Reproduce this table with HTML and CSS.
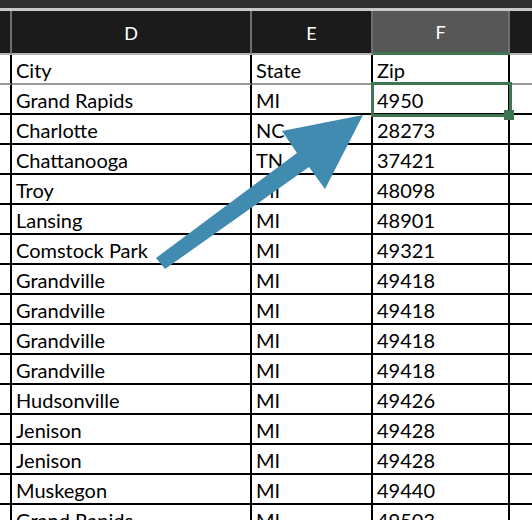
FILE: index.html
```html
<!DOCTYPE html>
<html>
<head>
<meta charset="utf-8">
<link rel="stylesheet" href="styles.css">
</head>
<body>
<div class="sheet">
  <div class="topbar"></div>
  <div class="topline"></div>
  <div class="grid">
    <div class="hd"></div><div class="hd">D</div><div class="hd">E</div><div class="hd hd-sel">F</div><div class="hd hd-last"></div>

    <div class="c first-row"></div><div class="c first-row">City</div><div class="c first-row">State</div><div class="c first-row">Zip</div><div class="c first-row last"></div>

    <div class="c"></div><div class="c">Grand Rapids</div><div class="c">MI</div><div class="c sel">4950<span class="handle"></span></div><div class="c last"></div>
    <div class="c"></div><div class="c">Charlotte</div><div class="c">NC</div><div class="c">28273</div><div class="c last"></div>
    <div class="c"></div><div class="c">Chattanooga</div><div class="c">TN</div><div class="c">37421</div><div class="c last"></div>
    <div class="c"></div><div class="c">Troy</div><div class="c">MI</div><div class="c">48098</div><div class="c last"></div>
    <div class="c"></div><div class="c">Lansing</div><div class="c">MI</div><div class="c">48901</div><div class="c last"></div>
    <div class="c"></div><div class="c">Comstock Park</div><div class="c">MI</div><div class="c">49321</div><div class="c last"></div>
    <div class="c"></div><div class="c">Grandville</div><div class="c">MI</div><div class="c">49418</div><div class="c last"></div>
    <div class="c"></div><div class="c">Grandville</div><div class="c">MI</div><div class="c">49418</div><div class="c last"></div>
    <div class="c"></div><div class="c">Grandville</div><div class="c">MI</div><div class="c">49418</div><div class="c last"></div>
    <div class="c"></div><div class="c">Grandville</div><div class="c">MI</div><div class="c">49418</div><div class="c last"></div>
    <div class="c"></div><div class="c">Hudsonville</div><div class="c">MI</div><div class="c">49426</div><div class="c last"></div>
    <div class="c"></div><div class="c">Jenison</div><div class="c">MI</div><div class="c">49428</div><div class="c last"></div>
    <div class="c"></div><div class="c">Jenison</div><div class="c">MI</div><div class="c">49428</div><div class="c last"></div>
    <div class="c"></div><div class="c">Muskegon</div><div class="c">MI</div><div class="c">49440</div><div class="c last"></div>
    <div class="c"></div><div class="c">Grand Rapids</div><div class="c">MI</div><div class="c">49503</div><div class="c last"></div>
  </div>
  <svg class="arrow" width="532" height="520" viewBox="0 0 532 520">
    <polygon points="156,258 165,269 309,167 325,189 363,115 282,131 297,153" fill="#418ab0"/>
  </svg>
</div>
</body>
</html>
```
FILE: styles.css
```css
html, body {
  margin: 0;
  padding: 0;
  background: #ffffff;
}
.sheet {
  position: relative;
  width: 532px;
  height: 520px;
  overflow: hidden;
  font-family: Lato, "Open Sans", sans-serif;
}
.topbar {
  height: 8px;
  background: #2f2f2f;
}
.topline {
  height: 3px;
  background: #c9c9c9;
}
.grid {
  display: grid;
  grid-template-columns: 12px 240px 121px 137px 22px;
  grid-auto-rows: 30px;
  grid-template-rows: 44px;
}
.hd {
  box-sizing: border-box;
  background: #1b1b1b;
  color: #ffffff;
  border-right: 2px solid #6e6e6e;
  border-bottom: 2px solid #b5b5b5;
  font-size: 18px;
  display: flex;
  align-items: center;
  justify-content: center;
  padding-top: 1px;
}
.hd-sel {
  background: #575757;
  border-bottom: 3px solid #3e7651;
}
.hd-last {
  border-right: none;
}
.c {
  box-sizing: border-box;
  border-right: 2px solid #000;
  border-bottom: 2px solid #000;
  font-size: 20px;
  color: #000;
  padding: 2px 0 0 4px;
  display: flex;
  align-items: center;
  white-space: nowrap;
  overflow: visible;
}
.first-row {
  border-bottom-color: #9a9a9a;
}
.last {
  border-right: none;
}
.sel {
  position: relative;
}
.sel::after {
  content: "";
  position: absolute;
  left: -2px;
  top: -3px;
  width: 141px;
  height: 35px;
  box-sizing: border-box;
  border: 3px solid #3e7651;
}
.handle {
  position: absolute;
  left: 131px;
  top: 25px;
  width: 10px;
  height: 10px;
  background: #3e7651;
  z-index: 2;
}
.arrow {
  position: absolute;
  left: 0;
  top: 0;
}
```
